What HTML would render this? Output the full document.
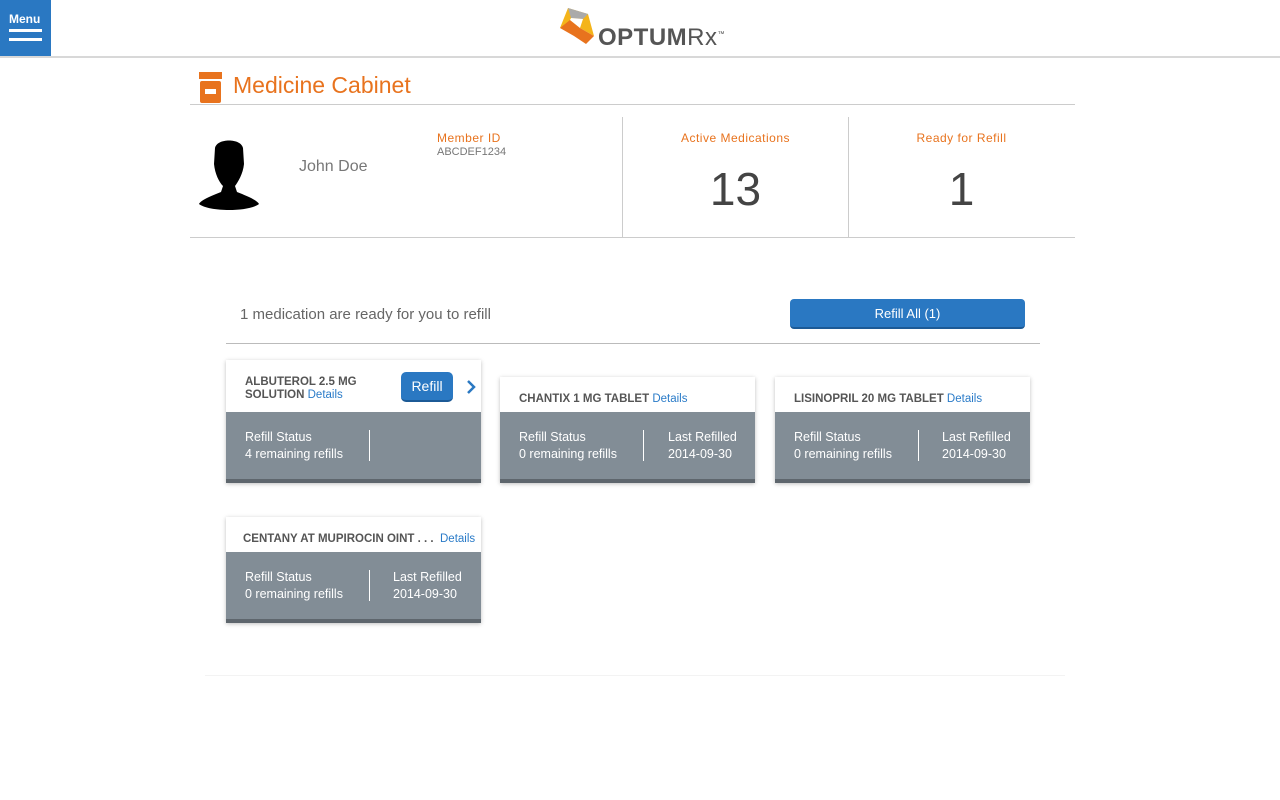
<!DOCTYPE html>
<html><head><style>
body{margin:0;width:1280px;height:800px;background:#fff;font-family:"Liberation Sans",Arial,sans-serif;position:relative;overflow:hidden}
.a{position:absolute}
.card{position:absolute;width:255px;background:#fff;box-shadow:0 1px 4px rgba(0,0,0,.25)}
.card .h{height:35px;font-size:11.5px;font-weight:bold;color:#555;padding:0 0 0 19px;box-sizing:border-box;line-height:13px}
.card .g{background:#828d96;height:67px;border-bottom:4px solid #5e666d;position:relative;color:#fff;font-size:12.5px;line-height:17px}
.det{color:#2a7bc8;font-weight:normal}
.or{color:#e8731e}
</style></head><body>
<div class="a" style="left:0;top:0;width:1280px;height:56px;border-bottom:2px solid #d8d8d8;background:#fff"></div>
<div class="a" style="left:0;top:0;width:51px;height:56px;background:#2a78c2">
<div class="a" style="left:9px;top:12px;color:#fff;font-size:12px;font-weight:bold">Menu</div>
<div class="a" style="left:9px;top:29px;width:33px;height:3px;background:#fff"></div>
<div class="a" style="left:9px;top:38px;width:33px;height:3px;background:#fff"></div>
</div>
<svg class="a" style="left:558px;top:6px" width="40" height="40" viewBox="0 0 40 40"><polygon points="10,2 30,8 36,30 22,22 8,20 2,22" fill="#f4b41a"/><polygon points="10,2 30,8 25,13 13,12" fill="#aaa"/><polygon points="2,22 12,14 22,22 36,30 28,38 16,30" fill="#e8731e"/><polygon points="13,12 25,13 22,22 12,14" fill="#fff"/></svg>
<div class="a" style="left:598px;top:24px;font-size:24px;color:#555;letter-spacing:0.5px"><b>OPTUM</b>Rx<sup style="font-size:7px">™</sup></div>
<div class="a" style="left:199px;top:72px;width:23px;height:31px">
<div class="a" style="left:0;top:0;width:23px;height:7px;background:#e8731e"></div>
<div class="a" style="left:1px;top:9px;width:21px;height:22px;background:#e8731e;border-radius:2px"></div>
<div class="a" style="left:6px;top:17px;width:11px;height:5px;background:#fff"></div></div>
<div class="a or" style="left:233px;top:72px;font-size:23px">Medicine Cabinet</div>
<div class="a" style="left:190px;top:104px;width:885px;height:1px;background:#ccc"></div>
<svg class="a" style="left:197px;top:138px" width="64" height="74" viewBox="0 0 64 74"><path d="M18 10 C20 0 44 0 46 10 L47 26 C46 36 41 44 38 48 L40 54 C50 58 60 62 62 66 C52 74 12 74 2 66 C4 62 14 58 24 54 L26 48 C22 44 18 36 17 26 Z" fill="#000"/></svg>
<div class="a" style="left:299px;top:158px;font-size:16px;color:#777">John Doe</div>
<div class="a or" style="left:437px;top:131px;font-size:12px;letter-spacing:.5px">Member ID</div>
<div class="a" style="left:437px;top:146px;font-size:11px;color:#777">ABCDEF1234</div>
<div class="a" style="left:622px;top:117px;width:1px;height:120px;background:#ccc"></div>
<div class="a" style="left:848px;top:117px;width:1px;height:120px;background:#ccc"></div>
<div class="a or" style="left:623px;width:225px;text-align:center;top:131px;font-size:12px;letter-spacing:.5px">Active Medications</div>
<div class="a" style="left:623px;width:225px;text-align:center;top:162px;font-size:46px;color:#444">13</div>
<div class="a or" style="left:849px;width:225px;text-align:center;top:131px;font-size:12px;letter-spacing:.5px">Ready for Refill</div>
<div class="a" style="left:849px;width:225px;text-align:center;top:162px;font-size:46px;color:#444">1</div>
<div class="a" style="left:190px;top:237px;width:885px;height:1px;background:#ccc"></div>
<div class="a" style="left:240px;top:306px;font-size:15px;color:#666">1 medication are ready for you to refill</div>
<div class="a" style="left:790px;top:299px;width:235px;height:30px;background:#2a78c2;border-radius:4px;border-bottom:2px solid #1c5a96;box-sizing:border-box;color:#fff;font-size:13px;text-align:center;line-height:29px">Refill All (1)</div>
<div class="a" style="left:226px;top:343px;width:814px;height:1px;background:#bbb"></div>

<div class="card" style="left:226px;top:360px"><div class="h" style="height:52px;padding-top:16px">ALBUTEROL 2.5 MG<br>SOLUTION <span class="det">Details</span></div>
<div class="a" style="left:175px;top:12px;width:52px;height:30px;background:#2a78c2;border-radius:5px;color:#fff;font-size:14px;text-align:center;line-height:29px;border-bottom:2px solid #1c5a96;box-sizing:border-box">Refill</div>
<svg class="a" style="left:240px;top:19px" width="10" height="16" viewBox="0 0 10 16"><path d="M2 2 L8 8 L2 14" stroke="#2a78c2" stroke-width="2.5" fill="none"/></svg>
<div class="g"><div class="a" style="left:19px;top:17px">Refill Status<br>4 remaining refills</div><div class="a" style="left:143px;top:18px;width:1px;height:31px;background:#fff"></div></div></div>

<div class="card" style="left:500px;top:377px"><div class="h" style="line-height:44px">CHANTIX 1 MG TABLET <span class="det">Details</span></div>
<div class="g"><div class="a" style="left:19px;top:17px">Refill Status<br>0 remaining refills</div><div class="a" style="left:143px;top:18px;width:1px;height:31px;background:#fff"></div><div class="a" style="left:168px;top:17px">Last Refilled<br>2014-09-30</div></div></div>

<div class="card" style="left:775px;top:377px"><div class="h" style="line-height:44px">LISINOPRIL 20 MG TABLET <span class="det">Details</span></div>
<div class="g"><div class="a" style="left:19px;top:17px">Refill Status<br>0 remaining refills</div><div class="a" style="left:143px;top:18px;width:1px;height:31px;background:#fff"></div><div class="a" style="left:167px;top:17px">Last Refilled<br>2014-09-30</div></div></div>

<div class="card" style="left:226px;top:517px"><div class="h" style="line-height:44px;padding-left:17px">CENTANY AT MUPIROCIN OINT . . . &nbsp;<span class="det">Details</span></div>
<div class="g"><div class="a" style="left:19px;top:17px">Refill Status<br>0 remaining refills</div><div class="a" style="left:143px;top:18px;width:1px;height:31px;background:#fff"></div><div class="a" style="left:167px;top:17px">Last Refilled<br>2014-09-30</div></div></div>
<div class="a" style="left:205px;top:675px;width:860px;height:1px;background:#f3f3f3"></div>
</body></html>
